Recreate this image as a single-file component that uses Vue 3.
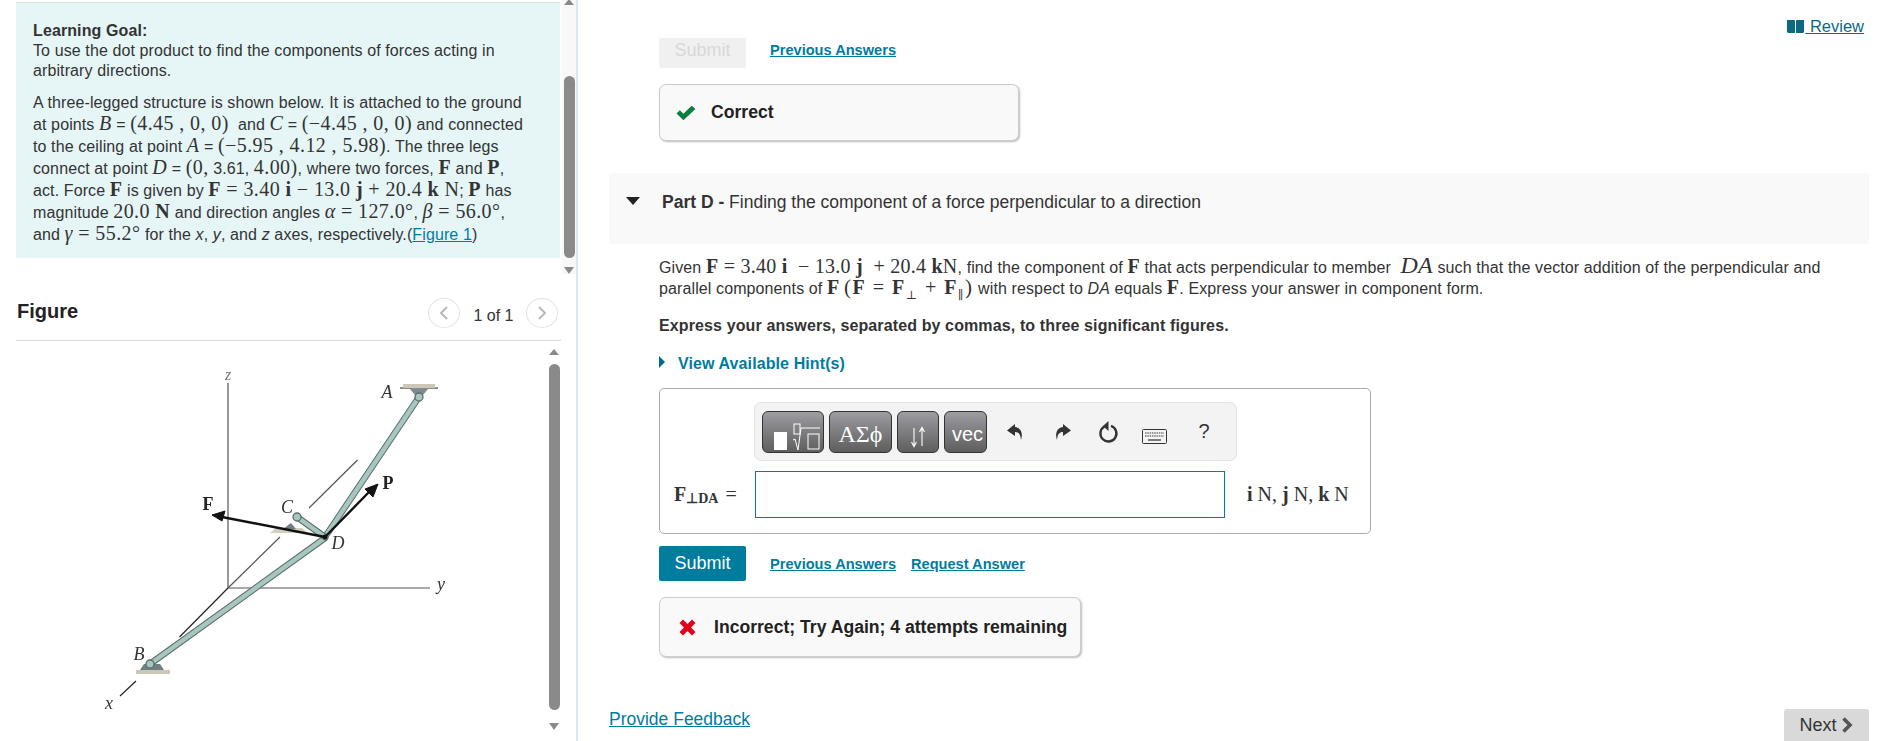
<script setup>
</script>

<template>
  <div class="page">
    <aside class="left">
      <section class="goal-pane">
        <div class="goal-scroll">
          <div class="goal">
            <div class="ln t20"><b>Learning Goal:</b></div>
            <div class="ln t20">To use the dot product to find the components of forces acting in</div>
            <div class="ln t20">arbitrary directions.</div>
            <div class="ln t20 gap">A three-legged structure is shown below. It is attached to the ground</div>
            <div class="ln pull">at points <i class="m">B</i> = <span class="m">(4.45 , 0, 0)</span>&nbsp; and <i class="m">C</i> = <span class="m">(−4.45 , 0, 0)</span> and connected</div>
            <div class="ln">to the ceiling at point <i class="m">A</i> = <span class="m">(−5.95 , 4.12 , 5.98)</span>. The three legs</div>
            <div class="ln">connect at point <i class="m">D</i> = <span class="m">(0,</span> 3.61, <span class="m">4.00)</span>, where two forces, <b class="m">F</b> and <b class="m">P</b>,</div>
            <div class="ln">act. Force <b class="m">F</b> is given by <span class="m"><b>F</b> = 3.40 <b>i</b> − 13.0 <b>j</b> + 20.4 <b>k</b> N</span>; <b class="m">P</b> has</div>
            <div class="ln">magnitude <span class="m">20.0 <b>N</b></span> and direction angles <span class="m"><i>α</i> = 127.0°</span>, <span class="m"><i>β</i> = 56.0°</span>,</div>
            <div class="ln">and <span class="m"><i>γ</i> = 55.2°</span> for the <i>x</i>, <i>y</i>, and <i>z</i> axes, respectively.(<a class="link">Figure 1</a>)</div>
          </div>
        </div>
        <div class="sbar sbar-top">
          <span class="arr up"></span>
          <span class="thumb"></span>
          <span class="arr down"></span>
        </div>
      </section>

      <section class="figure">
        <header class="fig-head">
          <h2>Figure</h2>
          <div class="pager">
            <span class="circ"><svg width="10" height="16" viewBox="0 0 10 16"><path d="M8 2 2 8l6 6" fill="none" stroke="#b9b9b9" stroke-width="2"/></svg></span>
            <span class="count">1 of 1</span>
            <span class="circ"><svg width="10" height="16" viewBox="0 0 10 16"><path d="M2 2l6 6-6 6" fill="none" stroke="#b9b9b9" stroke-width="2"/></svg></span>
          </div>
        </header>
        <div class="fig-body">
          <svg class="diagram" width="530" height="400" viewBox="16 341 530 400">
            <g stroke="#555" stroke-width="1.2" fill="none">
              <path d="M228 383V588H430"/>
              <path d="M228 588 280 537M309 508 357.5 460"/>
              <path d="M228 588 179.5 637M136 681 120 696" stroke="#222"/>
            </g>
            <!-- supports -->
            <path d="M400 388h38" stroke="#666" stroke-width="1.6"/>
            <path d="M403 386h32" stroke="#ccc8b8" stroke-width="4"/>
            <path d="M410 389h18l-5 6h-8z" fill="#7d8c90"/>
            <path d="M136 672h34" stroke="#ccc8b8" stroke-width="4"/>
            <path d="M140 670h24l-4-6h-16z" fill="#6f7f84"/>
            <path d="M276 528h26l6 5h-38z" fill="#d2cfbf"/>
            <path d="M283 529l8-6 5 6z" fill="#6f7f84"/>
            <!-- members -->
            <g stroke-linecap="round">
              <path d="M419 397 325 537" stroke="#5c6f6a" stroke-width="6.5"/>
              <path d="M419 397 325 537" stroke="#a6c6bf" stroke-width="4.5"/>
              <path d="M325 538 150 664" stroke="#5c6f6a" stroke-width="6.5"/>
              <path d="M325 538 150 664" stroke="#a6c6bf" stroke-width="4.5"/>
              <path d="M325 537 297 517" stroke="#5c6f6a" stroke-width="6.5"/>
              <path d="M325 537 297 517" stroke="#a6c6bf" stroke-width="4.5"/>
            </g>
            <circle cx="419" cy="397" r="4" fill="#a6c6bf" stroke="#5c6f6a" stroke-width="1.3"/>
            <circle cx="150" cy="664" r="4" fill="#a6c6bf" stroke="#5c6f6a" stroke-width="1.3"/>
            <circle cx="297" cy="517" r="4" fill="#a6c6bf" stroke="#5c6f6a" stroke-width="1.3"/>
            <!-- forces -->
            <path d="M325 537 222 517" stroke="#111" stroke-width="2.4"/>
            <path d="M212 515 225 511 222 521z" fill="#111" stroke="#111"/>
            <path d="M325 537 370 491" stroke="#111" stroke-width="2.4"/>
            <path d="M378 484 373 497 365 489z" fill="#111" stroke="#111"/>
            <circle cx="325" cy="537" r="2.4" fill="#111"/>
            <!-- labels -->
            <g class="labels">
              <text x="228" y="380" class="li gr" text-anchor="middle">z</text>
              <text x="441" y="590" class="li" text-anchor="middle">y</text>
              <text x="109" y="709" class="li" text-anchor="middle">x</text>
              <text x="387" y="398" class="li" text-anchor="middle">A</text>
              <text x="139" y="660" class="li" text-anchor="middle">B</text>
              <text x="287" y="513" class="li" text-anchor="middle">C</text>
              <text x="338" y="549" class="li" text-anchor="middle">D</text>
              <text x="208" y="510" class="lb" text-anchor="middle">F</text>
              <text x="388" y="489" class="lb" text-anchor="middle">P</text>
            </g>
          </svg>
          <div class="sbar sbar-fig">
            <span class="arr up"></span>
            <span class="thumb"></span>
            <span class="arr down"></span>
          </div>
        </div>
      </section>
    </aside>

    <main class="right">
      <div class="review-row">
        <a class="review">
          <svg width="17" height="13" viewBox="0 0 17 13"><path d="M0 0h7.500l.5 1V13H1l-1-1zM17 0H9.500L9 1V13H16l1-1z" fill="#0c6a80"/></svg>
          <span class="review-txt">&nbsp;Review</span>
        </a>
      </div>

      <div class="inner">
        <div class="actions first">
          <button class="btn disabled">Submit</button>
          <a class="act-link">Previous Answers</a>
        </div>
        <div class="fb fb-correct">
          <svg class="fb-icon" width="20" height="16" viewBox="0 0 18 14"><path d="M.5 7.500 3.500 4.500l3.200 3.200L14 .5 17.500 3.500 6.700 13.500z" fill="#0a7e3e"/></svg>
          <span>Correct</span>
        </div>
      </div>

      <div class="part-bar">
        <span class="tri-down"></span>
        <span class="part-title"><b>Part D -</b> Finding the component of a force perpendicular to a direction</span>
      </div>

      <div class="inner">
        <p class="prob">
          <span class="ln p21">Given <span class="m"><b>F</b> = 3.40 <b>i</b> &nbsp;− 13.0 <b>j</b> &nbsp;+ 20.4 <b>k</b>N</span>, find the component of <b class="m">F</b> that acts perpendicular to member <i class="m big da">DA</i> such that the vector addition of the perpendicular and</span>
          <span class="ln p21">parallel components of <b class="m">F</b> <span class="m expr"><span class="paren">(</span><b>F</b> = <b>F</b><sub>⊥</sub> + <b>F</b><sub>∥</sub><span class="paren">)</span></span> with respect to <i>DA</i> equals <b class="m">F</b>. Express your answer in component form.</span>
        </p>
        <p class="instr">Express your answers, separated by commas, to three significant figures.</p>
        <div class="hint"><span class="tri-right"></span><a>View Available Hint(s)</a></div>

        <div class="answer">
          <div class="tools">
            <button class="tb tb1">
              <svg width="60" height="40" viewBox="0 0 60 40">
                <rect x="11" y="20" width="13" height="18" fill="#fff"/>
                <g fill="none" stroke="#fff" stroke-width="1">
                  <rect x="31" y="12" width="6" height="10"/>
                  <path d="M30 28l2 -1 3 11 3 -22h19"/>
                  <rect x="45" y="22" width="11" height="15"/>
                </g>
              </svg>
            </button>
            <button class="tb tb2">ΑΣϕ</button>
            <button class="tb tb3">
              <svg width="16" height="22" viewBox="0 0 16 22"><g fill="none" stroke="#fff" stroke-width="1.100"><path d="M4 2v18M1.500 16 4 20.500 6.500 16"/><path d="M12 20V2M9.500 6 12 1.500 14.500 6"/></g></svg>
            </button>
            <button class="tb tb4">vec</button>
            <span class="ti ti-undo"><svg width="20" height="20" viewBox="0 0 20 20"><path d="M9 2 1 8.500 9 14v-4c3.500 0 5.500 2 6 8 2-6.500.5-12-6-13z" fill="#333"/></svg></span>
            <span class="ti ti-redo"><svg width="20" height="20" viewBox="0 0 20 20"><path d="M11 2l8 6.500L11 14v-4c-3.500 0-5.500 2-6 8-2-6.500-.5-12 6-13z" fill="#333"/></svg></span>
            <span class="ti ti-reset"><svg width="22" height="24" viewBox="0 0 22 24"><path d="M7.500 6.500a8 8 0 1 0 6.500-.6" fill="none" stroke="#333" stroke-width="2.400"/><path d="M9.500 1v10l-5.500-5z" fill="#333" transform="translate(2 0)"/></svg></span>
            <span class="ti ti-kb"><svg width="25" height="15" viewBox="0 0 25 15"><rect x=".5" y=".5" width="24" height="14" rx="1" fill="#f4f4f4" stroke="#333"/><path d="M3 4h19M3 7h19" stroke="#777" stroke-width="1.500" stroke-dasharray="1.500 .8"/><path d="M6 11h13" stroke="#555" stroke-width="1.500"/></svg></span>
            <span class="ti ti-help">?</span>
          </div>
          <div class="entry">
            <label class="lhs"><b>F</b><sub><b>⊥DA</b></sub><span class="eq">=</span></label>
            <div class="field"></div>
            <span class="units"><b>i</b> N, <b>j</b> N, <b>k</b> N</span>
          </div>
        </div>

        <div class="actions second">
          <button class="btn">Submit</button>
          <a class="act-link">Previous Answers</a>
          <a class="act-link">Request Answer</a>
        </div>
        <div class="fb fb-wrong">
          <svg class="fb-icon" width="17" height="17" viewBox="0 0 17 17"><path d="M4 .5 8.500 5 13 .5 16.500 4 12 8.500l4.500 4.500-3.500 3.500L8.500 12 4 16.500.5 13 5 8.500.5 4z" fill="#e2001a"/></svg>
          <span>Incorrect; Try Again; 4 attempts remaining</span>
        </div>
      </div>

      <footer class="foot">
        <a class="feedback">Provide Feedback</a>
        <button class="next">Next <svg width="13" height="16" viewBox="0 0 13 16"><path d="M2.500 1.500 9 8l-6.500 6.500" fill="none" stroke="#555" stroke-width="3.600"/></svg></button>
      </footer>
    </main>
  </div>
</template>

<style>
html, body { margin: 0; background: #fff; }
</style>

<style scoped>
.page { display: flex; width: 1896px; height: 741px; overflow: hidden; font-family: "Liberation Sans", Arial, sans-serif; font-size: 16px; color: #333; background: #fff; }
a { color: #007c9e; text-decoration: underline; }
.m { font-family: "Liberation Serif", "DejaVu Serif", serif; font-size: 20px; letter-spacing: .25px; }
.ln { display: block; white-space: nowrap; height: 22px; line-height: 22px; letter-spacing: .11px; }
.goal .m { letter-spacing: .4px; }
.t20 { height: 20px; line-height: 20px; }
.gap { margin-top: 12px; }
.pull { margin-top: -1px; }

.left { width: 576px; flex: none; border-right: 2px solid #dbe7f0; box-sizing: content-box; display: flex; flex-direction: column; }
.goal-pane { display: flex; height: 280px; flex: none; }
.goal-scroll { width: 544px; padding-left: 16px; flex: none; }
.goal { background: #e6f6f7; border-top: 1px solid #dfe3e5; margin-top: 2px; height: 256px; padding: 18px 0 0 17px; box-sizing: border-box; }

.sbar { display: flex; flex-direction: column; align-items: center; }
.sbar-top { width: 16px; background: #f8f8f8; margin-left: 2px; height: 274px; }
.arr { width: 0; height: 0; border-left: 5.500px solid transparent; border-right: 5.500px solid transparent; }
.arr.up { border-bottom: 6px solid #8a8a8a; }
.arr.down { border-top: 7px solid #8a8a8a; }
.thumb { width: 11px; border-radius: 6px; background: #8a8a8a; }
.sbar-top .arr.up { margin-top: -1px; }
.sbar-top .thumb { height: 196px; margin-top: 71px; margin-bottom: 9px; }

.figure { flex: 1; padding-left: 16px; }
.fig-head { display: flex; align-items: flex-start; justify-content: space-between; width: 545px; height: 60px; border-bottom: 1px solid #d8dcdf; }
.fig-head h2 { margin: 20px 0 0 1px; font-size: 20px; line-height: 23px; font-weight: bold; color: #222; }
.pager { display: flex; align-items: center; margin-top: 18px; padding-right: 3px; }
.circ { width: 32px; height: 30px; border: 1px solid #e3e3e3; border-radius: 50%; display: flex; align-items: center; justify-content: center; box-sizing: border-box; }
.count { width: 66px; padding-left: 1px; box-sizing: border-box; text-align: center; font-size: 16px; margin-top: 5px; }

.fig-body { display: flex; height: 400px; }
.diagram { display: block; flex: none; width: 530px; filter: blur(.35px); }
.li { font: italic 18px "Liberation Serif", serif; fill: #333; }
.li.gr { fill: #777; font-size: 16px; }
.lb { font: bold 18px "Liberation Serif", serif; fill: #222; }
.sbar-fig { width: 16px; }
.sbar-fig .arr.up { margin-top: 8px; }
.sbar-fig .thumb { height: 346px; margin-top: 9px; margin-bottom: 13px; }

.right { flex: 1; min-width: 0; display: flex; flex-direction: column; }
.review-row { display: flex; justify-content: flex-end; padding: 14px 32px 0 0; height: 24px; }
.review { display: flex; align-items: center; color: #0c6a80; font-size: 16.500px; line-height: 20px; text-decoration: none; }
.review-txt { text-decoration: underline; margin-left: 1px; }
.inner { margin-left: 81px; }
.actions { display: flex; align-items: center; }
.btn { width: 87px; height: 35px; border: 0; border-radius: 2px; background: #007c9e; color: #fff; font: 18px/35px "Liberation Sans", Arial, sans-serif; padding: 0; }
.btn.disabled { background: #f0f0f0; color: #d8d8d8; height: 30px; line-height: 20px; padding-bottom: 7px; border-radius: 0 0 2px 2px; }
.act-link { font-size: 14.600px; font-weight: bold; margin-left: 24px; line-height: 20px; }
.act-link + .act-link { margin-left: 15px; }
.first .act-link { margin-top: -6px; }
.fb { display: flex; align-items: center; border: 1px solid #ccc; border-radius: 7px; background: #f9f9f9; box-shadow: 1px 1px 2px #bbb; box-sizing: border-box; font-weight: bold; font-size: 17.600px; color: #222; }
.fb-correct { width: 360px; height: 57px; margin-top: 16px; }
.fb-correct .fb-icon { margin-left: 16px; margin-right: 15px; }
.fb-wrong { width: 422px; height: 60px; margin-top: 16px; }
.fb-wrong .fb-icon { margin-left: 19px; margin-right: 18px; }

.part-bar { margin: 32px 0 0 31px; width: 1260px; height: 71px; background: #f9f9f9; display: flex; align-items: center; }
.tri-down { width: 0; height: 0; border-left: 7px solid transparent; border-right: 7px solid transparent; border-top: 8px solid #222; margin: 0 0 15px 17px; }
.part-title { margin-left: 22px; font-size: 17.500px; margin-bottom: 13px; }

.prob { margin: 12px 0 0; }
.prob sub { font-size: 12px; line-height: 0; }
.big { font-size: 24px; line-height: 0; }
.da { margin-left: 5px; }
.expr { letter-spacing: 1.500px; }
.paren { font-size: 21px; line-height: 0; }
.p21 { height: 21px; line-height: 21px; }
.instr { margin: 18px 0 0; font-weight: bold; font-size: 16px; line-height: 20px; letter-spacing: .12px; }
.hint { margin: 18px 0 0; display: flex; align-items: center; font-weight: bold; }
.hint a { text-decoration: none; margin-left: 13px; font-size: 16px; line-height: 20px; letter-spacing: .1px; }
.tri-right { width: 0; height: 0; border-top: 6px solid transparent; border-bottom: 6px solid transparent; border-left: 6px solid #006b8a; margin-bottom: 4px; }

.answer { margin-top: 14px; width: 712px; height: 146px; box-sizing: border-box; border: 1px solid #aaa; border-radius: 5px; padding: 13px 0 0 94px; }
.tools { width: 483px; height: 59px; box-sizing: border-box; background: #f3f3f3; border: 1px solid #e4e4e4; border-radius: 7px; display: flex; align-items: center; padding: 0 0 0 7px; }
.tb { height: 42px; border: 1px solid #333; border-radius: 6px; background: linear-gradient(#9c9ca2, #5e5e5e); color: #fff; padding: 0; margin-right: 5px; flex: none; display: flex; align-items: center; justify-content: center; overflow: hidden; }
.tb1 { width: 62px; }
.tb2 { width: 63px; font: 24px "Liberation Serif", serif; padding-top: 5px; }
.tb3 { width: 42px; padding-top: 10px; }
.tb4 { width: 43px; font: 20px "Liberation Sans", sans-serif; padding: 6px 0 0 7px; justify-content: flex-start; }
.ti { display: flex; width: 46px; justify-content: center; flex: none; }
.ti-undo { margin-left: 1px; }
.ti-kb { margin-top: 9px; }
.ti-help { font-size: 20px; margin: 0 0 0 4px; }
.entry { display: flex; align-items: center; margin: 10px 0 0 -94px; }
.lhs { width: 81px; padding-left: 14px; box-sizing: border-box; font: 20px "Liberation Serif", serif; margin-right: 14px; flex: none; white-space: nowrap; }
.lhs sub { font-size: 14px; line-height: 0; vertical-align: -2px; }
.eq { margin-left: 7px; }
.field { width: 470px; height: 47px; box-sizing: border-box; border: 1px solid #007c9e; background: #fff; flex: none; }
.units { margin-left: 22px; font: 20px "Liberation Serif", serif; white-space: nowrap; }

.second { margin-top: 12px; }
.foot { margin: auto 0 0 31px; width: 1260px; display: flex; align-items: flex-end; justify-content: space-between; height: 32px; }
.feedback { font-size: 17.500px; line-height: 20px; margin-bottom: 12px; }
.next { width: 85px; height: 32px; background: #d9d9d9; border: 0; border-radius: 3px 3px 0 0; font: 18px "Liberation Sans", sans-serif; color: #333; padding: 0; display: flex; align-items: center; justify-content: center; gap: 4px; }
</style>
